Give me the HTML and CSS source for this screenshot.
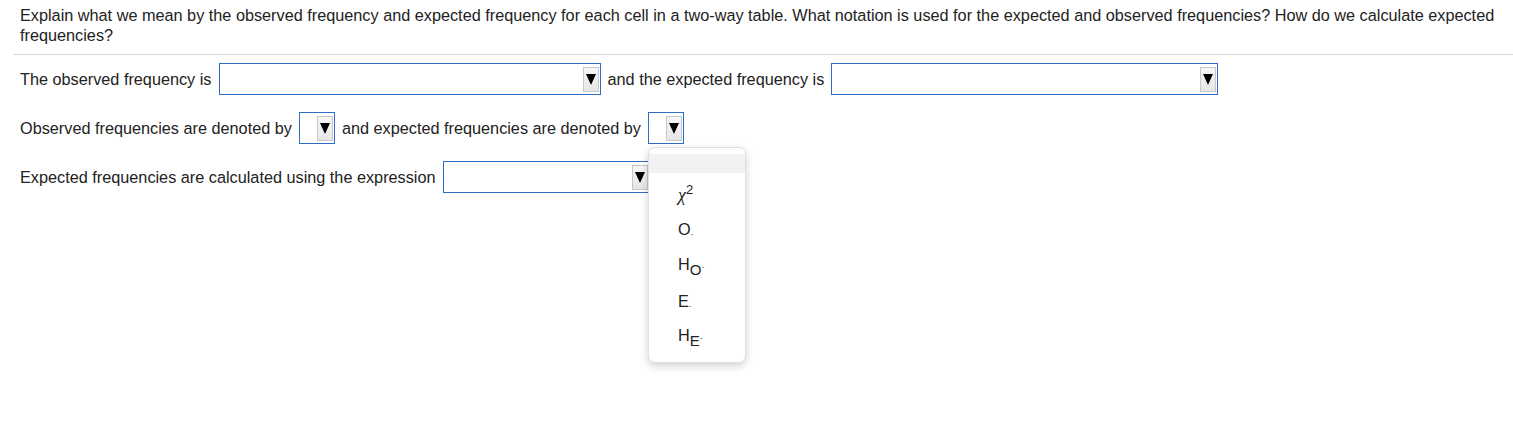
FILE: index.html
```html
<!DOCTYPE html>
<html lang="en">
<head>
    <meta charset="UTF-8">
    <title>Two-way table frequencies</title>
    <link rel="stylesheet" href="styles.css">
</head>
<body>
    <p class="question">Explain what we mean by the observed frequency and expected frequency for each cell in a two-way table. What notation is used for the expected and observed frequencies? How do we calculate expected frequencies?</p>
    <hr class="divider">

    <div class="answers">
        <div class="row">
            <span>The observed frequency is</span>
            <div class="select wide"><span class="arrow-btn"><span class="arrow"></span></span></div>
            <span>and the expected frequency is</span>
            <div class="select wide2"><span class="arrow-btn"><span class="arrow"></span></span></div>
        </div>
        <div class="row">
            <span>Observed frequencies are denoted by</span>
            <div class="select small"><span class="arrow-btn"><span class="arrow"></span></span></div>
            <span>and expected frequencies are denoted by</span>
            <div class="select small"><span class="arrow-btn"><span class="arrow"></span></span></div>
        </div>
        <div class="row">
            <span>Expected frequencies are calculated using the expression</span>
            <div class="select medium"><span class="arrow-btn"><span class="arrow"></span></span></div>
        </div>
    </div>

    <!-- open dropdown for the second notation select -->
    <div class="menu">
        <div class="menu-item blank"></div>
        <div class="menu-item"><i class="chi">χ</i><sup>2</sup></div>
        <div class="menu-item">O<span class="dot">.</span></div>
        <div class="menu-item tall">H<sub>O</sub><span class="dot">·</span></div>
        <div class="menu-item">E<span class="dot">.</span></div>
        <div class="menu-item">H<sub>E</sub><span class="dot">·</span></div>
    </div>
</body>
</html>
```

FILE: styles.css
```css
html {
    height: 100%;
}

body {
    margin: 0;
    min-height: 100%;
    font-family: "Liberation Sans", Arial, sans-serif;
    font-size: 16.25px;
    color: #222;
    background: #fff;
    position: relative;
}

.question {
    margin: 0;
    padding: 5px 10px 0 20px;
    line-height: 20px;
}

.divider {
    margin: 9px 0 0 13px;
    border: 0;
    border-top: 1px solid #d5d8dc;
    height: 0;
}

.answers {
    margin-top: 8px;
    padding-left: 20px;
}

.row {
    display: flex;
    align-items: center;
    gap: 7px;
    height: 32px;
    margin-bottom: 17px;
}

/* fake select boxes */
.select {
    box-sizing: border-box;
    height: 32px;
    border: 1px solid #2f6cc8;
    display: flex;
    justify-content: flex-end;
    align-items: center;
    padding-right: 1px;
}

.wide { width: 382px; }
.wide2 { width: 387px; }
.small { width: 36px; }
.medium { width: 207px; }

.arrow-btn {
    box-sizing: border-box;
    width: 16px;
    height: 25px;
    border: 1px solid #c7c7c7;
    background: linear-gradient(#f7f7f7, #e6e6e6);
    display: flex;
    justify-content: center;
    align-items: center;
}

.arrow {
    width: 0;
    height: 0;
    border-left: 5px solid transparent;
    border-right: 5px solid transparent;
    border-top: 11px solid #000;
}

/* dropdown list */
.menu {
    position: absolute;
    left: 648px;
    top: 147px;
    width: 98px;
    height: 216px;
    box-sizing: border-box;
    padding-top: 6px;
    background: #fff;
    border: 1px solid #e0e0e0;
    border-radius: 7px;
    box-shadow: 0 3px 8px rgba(0, 0, 0, 0.18);
}

.menu-item {
    height: 34px;
    line-height: 34px;
    padding-left: 29px;
}

.menu-item.blank {
    height: 19px;
    background: #f2f2f2;
    margin-bottom: 5px;
}

.menu-item.tall {
    height: 38px;
    line-height: 36px;
}

.chi {
    font-family: "Liberation Serif", "Times New Roman", serif;
    font-size: 18px;
}

.menu-item sup {
    font-size: 13px;
    vertical-align: 7px;
    line-height: 0;
}

.menu-item sub {
    font-size: 15px;
    vertical-align: -5px;
    line-height: 0;
}

.dot {
    font-size: 9px;
}
```
